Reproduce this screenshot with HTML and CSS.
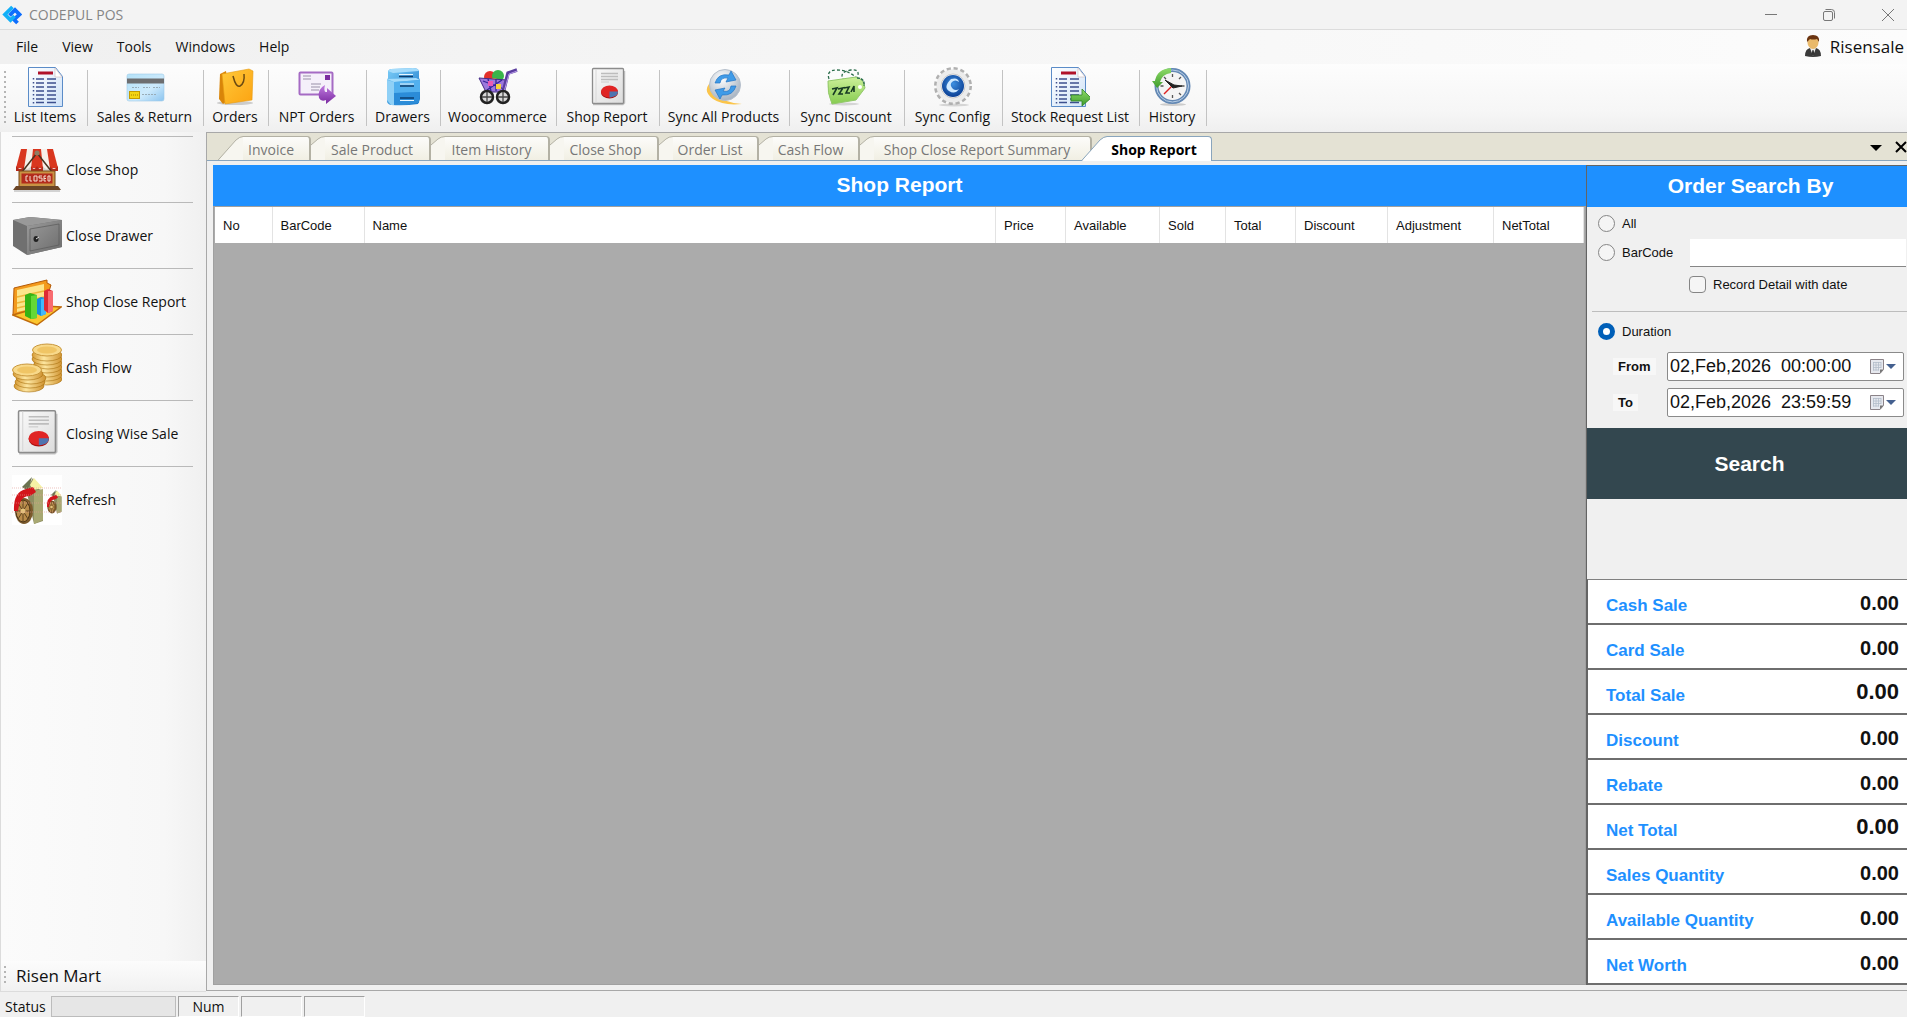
FILE: index.html
```html
<!DOCTYPE html>
<html lang="en">
<head>
    <meta charset="UTF-8">
    <meta name="viewport" content="width=device-width, initial-scale=1.0">
    <title>CODEPUL POS</title>
    <link rel="stylesheet" href="styles.css">
</head>
<body>
    <!-- Shared icons -->
    <svg width="0" height="0" class="defs">
        <defs>
            <linearGradient id="gPaper" x1="0" y1="0" x2="1" y2="1"><stop offset="0" stop-color="#fff"/><stop offset="1" stop-color="#cfe2f8"/></linearGradient>
            <linearGradient id="gPage" x1="0" y1="0" x2="1" y2="1"><stop offset="0" stop-color="#fafafa"/><stop offset="1" stop-color="#dcdcdc"/></linearGradient>
            <linearGradient id="gCard" x1="0" y1="0" x2="1" y2="1"><stop offset="0" stop-color="#b5e2f8"/><stop offset=".6" stop-color="#cdeafc"/><stop offset="1" stop-color="#8cc4ef"/></linearGradient>
            <linearGradient id="gBag" x1="0" y1="0" x2="1" y2="1"><stop offset="0" stop-color="#ffc93a"/><stop offset="1" stop-color="#fca311"/></linearGradient>
            <linearGradient id="gBlue" x1="0" y1="0" x2="1" y2="1"><stop offset="0" stop-color="#7ccdf8"/><stop offset="1" stop-color="#1676c8"/></linearGradient>
            <linearGradient id="gPurple" x1="0" y1="0" x2="0" y2="1"><stop offset="0" stop-color="#c07be0"/><stop offset="1" stop-color="#7a2aa0"/></linearGradient>
            <linearGradient id="gGreen" x1="0" y1="0" x2="0" y2="1"><stop offset="0" stop-color="#8fdc6a"/><stop offset="1" stop-color="#3f9c2c"/></linearGradient>
            <linearGradient id="gTag" x1="0" y1="0" x2="0" y2="1"><stop offset="0" stop-color="#cdf09a"/><stop offset="1" stop-color="#86cc50"/></linearGradient>
            <linearGradient id="gSafe" x1="0" y1="0" x2="1" y2="1"><stop offset="0" stop-color="#9b9b9b"/><stop offset="1" stop-color="#6b6b6b"/></linearGradient>
            <linearGradient id="gCoin" x1="0" y1="0" x2="1" y2="0"><stop offset="0" stop-color="#d69a34"/><stop offset=".4" stop-color="#fde6a0"/><stop offset="1" stop-color="#cf9230"/></linearGradient>
            <radialGradient id="gBall" cx=".4" cy=".3" r=".7"><stop offset="0" stop-color="#fff"/><stop offset="1" stop-color="#a8b4c2"/></radialGradient>
            <radialGradient id="gDeep" cx=".5" cy=".4" r=".6"><stop offset="0" stop-color="#3d8fe0"/><stop offset="1" stop-color="#0b3f94"/></radialGradient>
            <g id="listPage">
                <path d="M3.500.5h27l7 9v30h-34z" fill="url(#gPaper)" stroke="#5b8cc8"/>
                <path d="M30 1v9h7z" fill="#fff" stroke="#cbb" stroke-width=".6"/>
                <path d="M13 6h15" stroke="#b0122a" stroke-width="3"/>
                <path d="M11 12h8M22 12h9M11 16h8M22 16h9M11 20h8M22 20h9M11 24h8M22 24h9M11 28h8M22 28h9M11 32h8M22 32h9M11 35.500h8M22 35.500h9" stroke="#3c4f8e" stroke-width="1.500"/>
                <path d="M8.500 11v26" stroke="#3c4f8e" stroke-width="1.500" stroke-dasharray="1.500 2.500"/>
            </g>
            <g id="reportPage">
                <path d="M6 37.500h30l1.500-1.500V4" fill="none" stroke="#c4c4c4" stroke-width="1.500"/>
                <rect x="5.500" y="1.500" width="31" height="35" rx="1" fill="url(#gPage)" stroke="#8c8c8c" stroke-width="1.300"/>
                <path d="M9 2v34" stroke="#d8d8d8"/>
                <path d="M14 6.500h17M14 9.500h17M14 12.500h17" stroke="#bdbdbd" stroke-width="1.300"/>
                <path d="M14 15h8" stroke="#ccc"/>
                <ellipse cx="22.500" cy="25.500" rx="8.500" ry="6" fill="#a81010"/>
                <ellipse cx="22.500" cy="24.500" rx="8.500" ry="6" fill="#e02424"/>
                <path d="M22.500 24.500h8.500c0 3.500-3 5.500-8.500 6z" fill="#4f74b0"/>
            </g>
            <g id="calendar">
                <path d="M1.500 1.500h13v10l-3.500 4h-9.500z" fill="#e6e8ee" stroke="#8b8388"/>
                <path d="M14.500 11.500h-3.500v4z" fill="#777"/>
                <path d="M4 4.500h8M4 7h8M4 9.500h8M4 12h6M4.500 4v8.500M7 4v8.500M9.500 4v8.500M12 4v6" stroke="#b3bcc9" stroke-width=".8"/>
                <path d="M17 6h10l-5 5z" fill="#44608f"/>
            </g>
        </defs>
    </svg>

    <header class="titlebar">
        <svg class="logo" width="20" height="20" viewBox="0 0 20 20" fill="none" stroke-width="3.800">
            <path d="M7.500 10.500L13 5l4.500 4.500L12 14.500l3.500 3.500" stroke="#0d6efd"/>
            <path d="M10.500 2L3 9.500 8.500 15l4-4" stroke="#12b0f8"/>
        </svg>
        <span class="app-name">CODEPUL POS</span>
        <div class="window-buttons">
            <button aria-label="Minimize"><svg width="12" height="12"><path d="M0 5.500h12" stroke="#777"/></svg></button>
            <button aria-label="Restore"><svg width="12" height="12" fill="none" stroke="#777"><rect x=".5" y="2.500" width="9" height="9" rx="1.500"/><path d="M2.500.5h6q3 0 3 3v6"/></svg></button>
            <button aria-label="Close"><svg width="12" height="12"><path d="M0 0l12 12M12 0L0 12" stroke="#777"/></svg></button>
        </div>
    </header>

    <nav class="menubar">
        <button>File</button>
        <button>View</button>
        <button>Tools</button>
        <button>Windows</button>
        <button>Help</button>
        <div class="user">
            <svg width="18" height="24" viewBox="0 0 18 24">
                <path d="M1 22q0-7 5-8h6q5 1 5 8-8 2-16 0z" fill="#3a3a3a"/>
                <path d="M6 14l3 8 3-8z" fill="#eee"/>
                <path d="M8.500 16h1l1 4-1.500 2-1.500-2z" fill="#333"/>
                <ellipse cx="9" cy="8.500" rx="5.500" ry="6.500" fill="#e9b96b"/>
                <path d="M3 8Q2 1 9 1t6 7l-2-3q-4 1-7 0z" fill="#6b3411"/>
            </svg>
            <span>Risensale</span>
        </div>
    </nav>

    <div class="toolbar">
        <button class="tool">
            <svg viewBox="0 0 40 40"><use href="#listPage"/></svg>
            <span>List Items</span>
        </button>
        <button class="tool">
            <svg viewBox="0 0 40 40">
                <rect x="2" y="7" width="37" height="27" rx="2" fill="url(#gCard)" stroke="#9dcbe8" stroke-width=".6"/>
                <path d="M2 14h37" stroke="#6d6e70" stroke-width="5"/>
                <path d="M7 20.500h7M18 20.500h7M28 20.500h7M17 27.500h15" stroke="#98acb8" stroke-dasharray="2 1"/>
                <rect x="4.500" y="24.500" width="10" height="7" fill="#f4d512" stroke="#c49b00"/>
                <path d="M6 28h7" stroke="#a88500" stroke-dasharray="1 1"/>
            </svg>
            <span>Sales &amp; Return</span>
        </button>
        <button class="tool">
            <svg viewBox="0 0 40 40">
                <ellipse cx="20" cy="36" rx="18" ry="2" fill="#ccc"/>
                <path d="M5 7l6-3 4 28-7 5-4-5z" fill="#d98509"/>
                <path d="M7 7l27-5 4 2-1 29-27 4z" fill="url(#gBag)" stroke="#e69a10" stroke-width=".6"/>
                <path d="M18 9q3 12 7 10 5-3 4-12" fill="none" stroke="#6b4a12" stroke-width="1.500"/>
            </svg>
            <span>Orders</span>
        </button>
        <button class="tool">
            <svg viewBox="0 0 40 40">
                <rect x="2.500" y="5.500" width="33" height="22" rx="1" fill="#f5f0fa" stroke="#a56bc4" stroke-width="2"/>
                <rect x="28" y="8" width="5" height="5" fill="#7c2ea0"/>
                <path d="M6 9h8M6 12h8M14 17h10M14 20h9M14 23h8" stroke="#b8b0c4" stroke-width="1.300"/>
                <path d="M28 18q-8 4-6 13 2 4 7 2v4l10-8-9-8v4q-4 1-2-7z" fill="url(#gPurple)"/>
            </svg>
            <span>NPT Orders</span>
        </button>
        <button class="tool">
            <svg viewBox="0 0 40 40">
                <path d="M5 4q1-2 3-2l22-1q5 0 6 3v7l1 2v19l-2 5q-13 2-27 1-4-1-4-4V13l1-2z" fill="url(#gBlue)"/>
                <path d="M5 4l3-2 22-1q5 0 6 3L10 6zM4 12l29-1 4 2-26 2z" fill="#a5dcfb"/>
                <path d="M11 15l26-2v12l-26 1z" fill="#52b0ee"/>
                <path d="M11 26l26-1-1 11-25 2z" fill="#2b8cd8"/>
                <path d="M4 13v20l4 5h3V15z" fill="#8fd0f6"/>
                <path d="M16 9.500h14M17 19h14M17 31h14" stroke="#0d3c6c" stroke-width="1.500"/>
                <path d="M17 17h14M17 33.500h14M16 7.500h14" stroke="#e8f6ff"/>
            </svg>
            <span>Drawers</span>
        </button>
        <button class="tool">
            <svg viewBox="0 0 40 40">
                <circle cx="12" cy="10" r="6" fill="#e2302a"/>
                <circle cx="20" cy="9" r="6" fill="#39b54a"/>
                <circle cx="16" cy="15" r="4" fill="#f7b52c"/>
                <path d="M1 11l28 2-3 12H8z" fill="#9c78dc" stroke="#442a86"/>
                <path d="M5 14l21 8M9 23l15-10M10 12l3 12M18 12v12" stroke="#34249a" stroke-width="1.300"/>
                <path d="M10 14h5v5h-5z" fill="#e95ab7"/><path d="M18 17h5v5h-5z" fill="#f7d33c"/>
                <path d="M25 26l5-20 9-3" fill="none" stroke="#5a3d9e" stroke-width="3.500"/>
                <path d="M26 25l5-18 8-3" fill="none" stroke="#b79be8"/>
                <g fill="#d9d9d9" stroke="#222" stroke-width="2.500"><circle cx="9" cy="30" r="6"/><circle cx="25" cy="30" r="6"/></g>
                <path d="M9 25v10M4 30h10M25 25v10M20 30h10" stroke="#444" stroke-width="1.300"/>
            </svg>
            <span>Woocommerce</span>
        </button>
        <button class="tool">
            <svg viewBox="0 0 40 40"><use href="#reportPage"/></svg>
            <span>Shop Report</span>
        </button>
        <button class="tool">
            <svg viewBox="0 0 40 40">
                <path d="M5 17Q-1 25 9 32t29 5q-18-1-25-10-4-6-4-12z" fill="#fbc54b"/>
                <circle cx="21" cy="18" r="15.500" fill="url(#gBall)" stroke="#b6c0cc"/>
                <path d="M11 16q3-10 14-8l2-4 5 9-10 2 2-4q-7-1-8 5zM32 19q-3 10-14 9l-2 4-5-9 10-2-2 3q7 2 8-5z" fill="#3f9be8" stroke="#2374c4" stroke-width=".7"/>
            </svg>
            <span>Sync All Products</span>
        </button>
        <button class="tool">
            <svg viewBox="0 0 40 40">
                <ellipse cx="18" cy="37" rx="15" ry="1.500" fill="#d5d5d5"/>
                <path d="M3 12Q0 3 11 3t20 8q4-9-6-8-12 2-8 9" fill="none" stroke="#2c6e4c" stroke-width="1.300" stroke-dasharray="3 2"/>
                <path d="M2 14l28-4q8 2 9 11l-9 12-24 4q-5-11-4-23z" fill="url(#gTag)" stroke="#92c86a"/>
                <path d="M31 11q8 0 7 8" fill="none" stroke="#2c6e4c" stroke-width="1.500" stroke-dasharray="3 1"/>
                <circle cx="34" cy="20" r="2" fill="#fff"/>
                <path d="M6 22l5-1-4 7M12 22l5-1-4 6h4M18 21l5-1-3 6h4M25 25l3-6v6" fill="none" stroke="#173a24" stroke-width="1.600"/>
            </svg>
            <span>Sync Discount</span>
        </button>
        <button class="tool">
            <svg viewBox="0 0 40 40">
                <ellipse cx="21" cy="38" rx="15" ry="1.500" fill="#d5d5d5"/>
                <circle cx="20" cy="19" r="17" fill="#f3f3f3" stroke="#b0b0b0" stroke-width="4" stroke-dasharray="4 2.680"/>
                <circle cx="20" cy="19" r="16.500" fill="#ececec"/>
                <circle cx="20" cy="19" r="12" fill="#fff" stroke="#c8c8c8"/>
                <circle cx="20" cy="19" r="11" fill="url(#gDeep)"/>
                <path d="M18 12q7-2 8 3-4-3-7 0t1 7q3 2 6 0-4 6-10 2t2-12z" fill="#cfe9ff"/>
            </svg>
            <span>Sync Config</span>
        </button>
        <button class="tool">
            <svg viewBox="0 0 40 40">
                <use href="#listPage" x="-2"/>
                <path d="M21 28h11v-6l9 9-9 8v-5H21z" fill="url(#gGreen)" stroke="#2f8424" stroke-width=".8"/>
            </svg>
            <span>Stock Request List</span>
        </button>
        <button class="tool">
            <svg viewBox="0 0 40 40">
                <ellipse cx="21" cy="37.500" rx="13" ry="1.500" fill="#ccc"/>
                <circle cx="20.500" cy="19" r="16" fill="#f4f4f4" stroke="#6388b4" stroke-width="4"/>
                <circle cx="20.500" cy="19" r="16" fill="none" stroke="#b8cee6"/>
                <path d="M20.500 7v3M20.500 28v3M8.500 19h3M29.500 19h3M12 10l2 2M29 28l-2-2M29 10l-2 2" stroke="#555" stroke-width="1.300"/>
                <path d="M20 19l-8 8" stroke="#d22" stroke-width="1.500"/>
                <path d="M13 13l9 5 8 1-9 2z" fill="#222" stroke="#222"/>
                <path d="M19 1v5q-9 1-11 9h3l-6 6-5-7h3Q5 2 19 1z" fill="url(#gGreen)"/>
            </svg>
            <span>History</span>
        </button>
    </div>

    <div class="workspace">
        <aside class="sidebar">
            <div class="side-items">
                <button class="side-item">
                    <svg viewBox="0 0 50 50">
                        <path d="M9 4h32l5 19H4z" fill="#d9361f"/>
                        <path d="M15 4h6l-2 20h-7zM29 4h6l3 20h-7z" fill="#f6f0ea"/>
                        <path d="M4 21q4 6 8 0v5H4zM19 21q3 6 6 0 3 6 6 0v5H19zM38 21q4 6 8 0v5h-8z" fill="#b5271a"/>
                        <path d="M12 21q3 6 7 0v5h-7zM31 21q3 6 7 0v5h-7z" fill="#d8d0c8"/>
                        <path d="M10 27L25 8l15 19" fill="none" stroke="#4a3320" stroke-width="1.500"/>
                        <circle cx="25" cy="8" r="2.500" fill="#8d7d63"/>
                        <rect x="7" y="26" width="36" height="16" fill="#c99243" stroke="#7b4a1c"/>
                        <rect x="9.500" y="28.500" width="31" height="10" fill="#b32b1d"/>
                        <path d="M16 31h-2v5h2M18 31v5h2M22 31h3v5h-3zM30 31h-3v2h3v3h-3M34 31h-2v5h2M32 33.500h2M36 31h2v5h-2z" fill="none" stroke="#f5ddd0"/>
                        <path d="M4 41h42l3 4H1z" fill="#6b4526"/><path d="M2 46h46" stroke="#aaa"/>
                    </svg>
                    <span>Close Shop</span>
                </button>
                <button class="side-item">
                    <svg viewBox="0 0 50 50">
                        <path d="M1 9l17-3 32 3v27L15 44 1 35z" fill="#707070"/>
                        <path d="M1 9l17-3 32 3-35 6z" fill="#999"/>
                        <path d="M15 15l35-6v27l-35 8z" fill="url(#gSafe)"/>
                        <path d="M18 18l29-5v21l-29 6z" fill="none" stroke="#5a5a5a" stroke-width=".7"/>
                        <ellipse cx="24" cy="28" rx="2.500" ry="3" fill="#222"/><path d="M24 28l3-2" stroke="#ddd"/>
                    </svg>
                    <span>Close Drawer</span>
                </button>
                <button class="side-item">
                    <svg viewBox="0 0 50 50">
                        <path d="M2 11l33-8v3l4 2-7 22-31 8z" fill="#f39a1c" stroke="#b45a08"/>
                        <path d="M5 13l27-6v22L5 35z" fill="#fde58a"/>
                        <path d="M5 20l27-6M5 26l27-6M5 31l27-6" stroke="#eeb73a" stroke-width="1.500"/>
                        <path d="M1 38l31-9 17 1-24 18z" fill="#fbc62e" stroke="#c06a0c" stroke-width="1.500"/>
                        <path d="M13 18l5-2 7 2v23l-6 1-6-3z" fill="#36b314"/><path d="M19 19l6-1v23l-6 1z" fill="#65d836"/>
                        <path d="M25 22l4-2 5 1v16l-5 2-4-2z" fill="#148ce0"/><path d="M29 22l5-1v16l-5 2z" fill="#43b8fa"/>
                        <path d="M32 14l4-2 5 2v20l-5 2-4-3z" fill="#de2a35"/><path d="M36 14l5 0v20l-5 2z" fill="#f86b70"/>
                    </svg>
                    <span>Shop Close Report</span>
                </button>
                <button class="side-item">
                    <svg viewBox="0 0 50 50">
                        <g fill="url(#gCoin)" stroke="#a8700f" stroke-width=".6">
                            <ellipse cx="35" cy="36" rx="15" ry="6"/><ellipse cx="35" cy="32" rx="15" ry="6"/><ellipse cx="36" cy="28" rx="14" ry="6"/><ellipse cx="35" cy="24" rx="15" ry="6"/><ellipse cx="36" cy="20" rx="14" ry="6"/><ellipse cx="35" cy="16" rx="15" ry="6"/><ellipse cx="35" cy="12" rx="15" ry="6"/>
                        </g>
                        <ellipse cx="35" cy="7" rx="14.500" ry="6" fill="#f8d98a" stroke="#c9973c"/>
                        <ellipse cx="35" cy="7" rx="10" ry="3.500" fill="#f0c565"/>
                        <g fill="url(#gCoin)" stroke="#a8700f" stroke-width=".6">
                            <ellipse cx="17" cy="43" rx="15" ry="6"/><ellipse cx="18" cy="39" rx="15" ry="6"/><ellipse cx="19" cy="35" rx="15" ry="6"/><ellipse cx="16" cy="31" rx="15" ry="6"/>
                        </g>
                        <ellipse cx="15" cy="27" rx="14.500" ry="6" fill="#f8d98a" stroke="#c9973c"/>
                        <ellipse cx="15" cy="27" rx="10" ry="3.500" fill="#f0c565"/>
                    </svg>
                    <span>Cash Flow</span>
                </button>
                <button class="side-item">
                    <svg viewBox="0 0 42 42"><use href="#reportPage"/></svg>
                    <span>Closing Wise Sale</span>
                </button>
                <button class="side-item">
                    <svg viewBox="0 0 50 50">
                        <path d="M0 0h50v50H0z" fill="#fff"/>
                        <g id="safe">
                            <path d="M14 14l7-11 4 10 6 3v30l-9 3z" fill="#8d8d62"/>
                            <path d="M10 12l10-10-4 14z" fill="#6b7350"/>
                            <path d="M22 3l9 10-10 2-3-5z" fill="#f5f1a5"/>
                            <path d="M22 16l9-2v31l-9 4z" fill="#a8a872"/>
                            <ellipse cx="12" cy="36" rx="9" ry="13" fill="#7c5a2c"/>
                            <ellipse cx="11" cy="36" rx="7" ry="11" fill="#b98c4a" stroke="#4e3718"/>
                            <path d="M11 25v22M4 36h14M6 28l10 16M16 28L6 44" stroke="#5e431e"/>
                            <circle cx="11" cy="36" r="2.500" fill="#e5c37c"/>
                            <path d="M2 36q-1-19 12-22l7-2 3 5-6 4q-10-1-12 15z" fill="#d3161c"/>
                        </g>
                        <use href="#safe" transform="translate(34 14) scale(.5)"/>
                        <path d="M0 13h50M0 20h50M0 28h50M0 37h50" stroke="#e09a96" stroke-width=".6" stroke-dasharray="1 1"/>
                    </svg>
                    <span>Refresh</span>
                </button>
            </div>
            <div class="store-name">Risen Mart</div>
        </aside>

        <main class="document">
            <div class="tabs">
                <button class="tab"><svg width="27" height="27"><path d="M0 27L20 4q4-3 7-3V27z" class="tab-fill"/><path d="M0 26.500L20 4q4-3.500 7-3.500" class="tab-line"/></svg><span>Invoice</span></button>
                <button class="tab"><svg width="14" height="27"><path d="M0 9l7-6q3-2 7-2v26H0z" class="tab-fill"/><path d="M0 9l7-6q3-2.500 7-2.500" class="tab-line"/></svg><span>Sale Product</span></button>
                <button class="tab"><svg width="14" height="27"><path d="M0 9l7-6q3-2 7-2v26H0z" class="tab-fill"/><path d="M0 9l7-6q3-2.500 7-2.500" class="tab-line"/></svg><span>Item History</span></button>
                <button class="tab"><svg width="14" height="27"><path d="M0 9l7-6q3-2 7-2v26H0z" class="tab-fill"/><path d="M0 9l7-6q3-2.500 7-2.500" class="tab-line"/></svg><span>Close Shop</span></button>
                <button class="tab"><svg width="14" height="27"><path d="M0 9l7-6q3-2 7-2v26H0z" class="tab-fill"/><path d="M0 9l7-6q3-2.500 7-2.500" class="tab-line"/></svg><span>Order List</span></button>
                <button class="tab"><svg width="14" height="27"><path d="M0 9l7-6q3-2 7-2v26H0z" class="tab-fill"/><path d="M0 9l7-6q3-2.500 7-2.500" class="tab-line"/></svg><span>Cash Flow</span></button>
                <button class="tab"><svg width="14" height="27"><path d="M0 9l7-6q3-2 7-2v26H0z" class="tab-fill"/><path d="M0 9l7-6q3-2.500 7-2.500" class="tab-line"/></svg><span>Shop Close Report Summary</span></button>
                <button class="tab active"><svg width="27" height="27"><path d="M0 27L20 4q4-3 7-3V27z" class="tab-fill"/><path d="M0 26.500L20 4q4-3.500 7-3.500" class="tab-line"/></svg><span>Shop Report</span></button>
                <div class="tab-controls">
                    <button aria-label="Tab list"><svg width="12" height="12"><path d="M0 4h12L6 10z"/></svg></button>
                    <button aria-label="Close tab"><svg width="12" height="12"><path d="M1 1l10 10M11 1L1 11" stroke="#000" stroke-width="2"/></svg></button>
                </div>
            </div>

            <div class="content">
                <section class="report">
                    <h1 class="heading">Shop Report</h1>
                    <div class="grid">
                        <table>
                            <colgroup>
                                <col class="w-no"><col class="w-barcode"><col><col class="w-price"><col class="w-available"><col class="w-sold"><col class="w-total"><col class="w-discount"><col class="w-adjustment"><col class="w-net">
                            </colgroup>
                            <thead>
                                <tr>
                                    <th>No</th>
                                    <th>BarCode</th>
                                    <th>Name</th>
                                    <th>Price</th>
                                    <th>Available</th>
                                    <th>Sold</th>
                                    <th>Total</th>
                                    <th>Discount</th>
                                    <th>Adjustment</th>
                                    <th>NetTotal</th>
                                </tr>
                            </thead>
                            <tbody></tbody>
                        </table>
                    </div>
                </section>

                <section class="search">
                    <h2 class="heading">Order Search By</h2>
                    <form class="filters">
                        <div class="row">
                            <input type="radio" name="by" id="byAll">
                            <label for="byAll">All</label>
                        </div>
                        <div class="row">
                            <input type="radio" name="by" id="byBarcode">
                            <label for="byBarcode">BarCode</label>
                            <input type="text" class="barcode" aria-label="BarCode">
                        </div>
                        <div class="row detail">
                            <input type="checkbox" id="withDate">
                            <label for="withDate">Record Detail with date</label>
                        </div>
                        <hr>
                        <div class="row">
                            <input type="radio" name="by" id="byDuration" checked>
                            <label for="byDuration">Duration</label>
                        </div>
                        <div class="dates">
                            <div class="date-row">
                                <label for="from">From</label>
                                <div class="date-box">
                                    <input type="text" id="from" value="02,Feb,2026  00:00:00">
                                    <svg width="28" height="18"><use href="#calendar"/></svg>
                                </div>
                            </div>
                            <div class="date-row">
                                <label for="to">To</label>
                                <div class="date-box">
                                    <input type="text" id="to" value="02,Feb,2026  23:59:59">
                                    <svg width="28" height="18"><use href="#calendar"/></svg>
                                </div>
                            </div>
                        </div>
                    </form>
                    <button class="search-button">Search</button>
                    <dl class="totals">
                        <div><dt>Cash Sale</dt><dd>0.00</dd></div>
                        <div><dt>Card Sale</dt><dd>0.00</dd></div>
                        <div><dt>Total Sale</dt><dd class="big">0.00</dd></div>
                        <div><dt>Discount</dt><dd>0.00</dd></div>
                        <div><dt>Rebate</dt><dd>0.00</dd></div>
                        <div><dt>Net Total</dt><dd class="big">0.00</dd></div>
                        <div><dt>Sales Quantity</dt><dd>0.00</dd></div>
                        <div><dt>Available Quantity</dt><dd>0.00</dd></div>
                        <div><dt>Net Worth</dt><dd>0.00</dd></div>
                    </dl>
                </section>
            </div>
        </main>
    </div>

    <footer class="statusbar">
        <span class="status-label">Status</span>
        <div class="progress"></div>
        <div class="panel">Num</div>
        <div class="panel"></div>
        <div class="panel"></div>
    </footer>
</body>
</html>
```

FILE: styles.css
```css
* {
    box-sizing: border-box;
}
body {
    margin: 0;
    height: 100vh;
    display: flex;
    flex-direction: column;
    overflow: hidden;
    background: #f0f0f0;
    color: #111;
    font-family: "Open Sans", "Noto Sans", sans-serif;
    font-size: 14px;
}
button {
    margin: 0;
    padding: 0;
    border: none;
    background: none;
    color: inherit;
    font: inherit;
    white-space: nowrap;
}
svg {
    display: block;
    flex: none;
}
.defs {
    position: absolute;
}

/* Title bar and menu */
.titlebar {
    display: flex;
    align-items: center;
    height: 30px;
    padding-left: 2px;
    background: #f3f3f3;
    border-bottom: 1px solid #dcdcdc;
    color: #858585;
    flex: none;
}
.app-name {
    margin-left: 7px;
}
.window-buttons {
    display: flex;
    margin-left: auto;
}
.window-buttons button {
    display: flex;
    justify-content: center;
    width: 58px;
}
.window-buttons button:last-child {
    width: 60px;
    margin-right: -11px;
}
.menubar {
    display: flex;
    align-items: center;
    gap: 24px;
    height: 34px;
    padding: 0 3px 2px 16px;
    background: linear-gradient(to right, #f0f0f0, #fcfcfc);
    flex: none;
}
.user {
    display: flex;
    align-items: center;
    gap: 8px;
    margin-left: auto;
    font-size: 17px;
}

/* Toolbar */
.toolbar {
    display: grid;
    grid-template-columns: 83px 116px 65px 98px 74px 116px 103px 130px 115px 98px 137px 67px;
    align-items: center;
    height: 68px;
    padding-left: 5px;
    background: linear-gradient(#fdfdfd, #f6f6f6 70%, #efefef);
    flex: none;
}
.toolbar::before, .store-name::before {
    content: "";
    position: absolute;
    left: 4px;
    width: 2px;
    height: 54px;
    background: repeating-linear-gradient(#b5b5b5 0 2px, transparent 2px 5px);
}
.tool {
    display: flex;
    flex-direction: column;
    align-items: center;
    height: 56px;
    padding-right: 2px;
    border-right: 1px solid #c3c3c3;
    line-height: 20px;
}
.tool svg {
    width: 40px;
    height: 40px;
    margin-top: -3px;
}

/* Left side */
.workspace {
    display: flex;
    flex: 1;
    min-height: 0;
}
.sidebar {
    display: flex;
    flex-direction: column;
    width: 206px;
    background: linear-gradient(to right, #fbfbfb, #f7f7f7 80%, #f0f0f0);
    border-left: 1px solid #dcdcdc;
    flex: none;
}
.side-items {
    flex: 1;
    padding: 4px 13px 0 11px;
}
.side-item {
    display: flex;
    align-items: center;
    gap: 4px;
    width: 100%;
    height: 66px;
    border-top: 1px solid #b9b9b9;
}
.side-item svg {
    width: 50px;
    height: 50px;
}
.store-name {
    display: flex;
    align-items: center;
    height: 31px;
    padding: 0 0 2px 15px;
    background: linear-gradient(#fcfcfc, #f1f1f1);
    border-bottom: 1px solid #dcdcdc;
    font-size: 17px;
}
.store-name::before {
    height: 18px;
}

/* Document tabs */
.document {
    display: flex;
    flex-direction: column;
    flex: 1;
    min-width: 0;
    margin-bottom: 1px;
    border: 1px solid #a8a8a8;
    border-right: none;
    background: #f0f0f0;
}
.tabs {
    display: grid;
    grid-template-columns: 95px 120px 119px 109px 100px 101px 232px 120px 1fr;
    align-items: end;
    height: 28px;
    padding-left: 9px;
    background: #e4e2d4;
    border-bottom: 1px solid #89a5bd;
    flex: none;
}
.tab {
    display: flex;
    height: 24px;
    color: #777;
}
.tab svg {
    height: 24px;
}
.tab span {
    flex: 1;
    padding-right: 10px;
    border-top: 1px solid #b3b1a4;
    border-right: 2px solid #b3b1a4;
    border-top-right-radius: 4px;
    background: linear-gradient(#fcfcfa, #f1efe3);
    line-height: 25px;
}
.tab-fill {
    fill: #f7f6f0;
}
.tab-line {
    fill: none;
    stroke: #b3b1a4;
}
.tab.active {
    height: 25px;
    margin: 0 0 -1px -12px;
    color: #000;
    font-weight: bold;
    z-index: 1;
}
.active svg {
    height: 25px;
}
.tab.active span {
    border-color: #89a5bd;
    border-right-width: 1px;
    background: #fff;
}
.active .tab-fill {
    fill: #fff;
}
.active .tab-line {
    stroke: #89a5bd;
}
.tab-controls {
    display: flex;
    align-items: center;
    justify-content: flex-end;
    gap: 13px;
    height: 100%;
}

/* Report */
.content {
    display: flex;
    flex: 1;
    min-height: 0;
    padding: 4px 0 5px 6px;
}
.report {
    display: flex;
    flex-direction: column;
    flex: 1;
    min-width: 0;
}
.heading {
    margin: 0;
    height: 41px;
    background: #1e90ff;
    color: #fff;
    font: bold 21px/40px "Liberation Sans", Arial, sans-serif;
    text-align: center;
    flex: none;
}
.grid {
    flex: 1;
    padding: 0 1px;
    background: #ababab;
    border: 1px solid #a0a0a0;
}
table {
    width: 100%;
    table-layout: fixed;
    border-collapse: collapse;
    background: #fff;
    font-family: "Liberation Sans", Arial, sans-serif;
    font-size: 13px;
}
th {
    height: 36px;
    padding: 0 8px;
    border-right: 1px solid #e3e3e3;
    text-align: left;
    font-weight: normal;
}
.w-no {
    width: 57px;
}
.w-barcode {
    width: 92px;
}
.w-price, .w-total {
    width: 70px;
}
.w-available {
    width: 94px;
}
.w-sold {
    width: 66px;
}
.w-discount {
    width: 92px;
}
.w-adjustment {
    width: 106px;
}
.w-net {
    width: 90px;
}

/* Search panel */
.search {
    display: flex;
    flex-direction: column;
    width: 321px;
    border-left: 1px solid #646464;
    border-top: 1px solid #646464;
    font-family: "Liberation Sans", Arial, sans-serif;
    font-size: 13px;
    flex: none;
}
.search .heading {
    padding-left: 7px;
}
.filters {
    padding: 2px 0 4px 11px;
}
.row {
    display: flex;
    align-items: center;
    height: 29px;
    gap: 7px;
}
.row input[type="radio"], .row input[type="checkbox"] {
    appearance: none;
    width: 17px;
    height: 17px;
    margin: 0;
    border: 1px solid #858585;
    border-radius: 50%;
    background: #f5f5f5;
    flex: none;
}
.row input[type="checkbox"] {
    border-radius: 4px;
}
.row input[type="radio"]:checked {
    border: 5px solid #005fb8;
    background: #fff;
}
.barcode {
    flex: 1;
    min-width: 0;
    height: 28px;
    margin: 0 1px 0 10px;
    border: none;
    border-bottom: 1px solid #868686;
    background: #fff;
}
.detail {
    height: 34px;
    padding-left: 91px;
}
.filters hr {
    margin: 10px 0 5px -6px;
    border: none;
    border-top: 1px solid #bdbdbd;
}
.dates {
    padding-top: 6px;
}
.date-row {
    display: flex;
    align-items: center;
    justify-content: space-between;
    margin: 0 3px 7px 15px;
}
.date-row label {
    padding: 0 5px;
    background: #f7f7f7;
    font-weight: bold;
    line-height: 17px;
}
.date-box {
    display: flex;
    align-items: center;
    width: 237px;
    height: 29px;
    padding-right: 6px;
    border: 1px solid #8a8a8a;
    border-radius: 2px;
    background: #fff;
}
.date-box input {
    flex: 1;
    min-width: 0;
    padding: 0 2px;
    border: none;
    background: none;
    color: #111;
    font: 18px "Liberation Sans", Arial, sans-serif;
}
.search-button {
    height: 71px;
    padding-left: 5px;
    background: #33474f;
    color: #fff;
    font: bold 21px "Liberation Sans", Arial, sans-serif;
    flex: none;
}
.totals {
    margin: auto 0 0;
    border-top: 1px solid #808080;
    border-left: 1px solid #646464;
    background: #fff;
}
.totals div {
    display: flex;
    align-items: center;
    justify-content: space-between;
    height: 45px;
    padding: 0 8px 0 18px;
    border-bottom: 2px solid #6e6e6e;
}
.totals dt {
    padding-top: 8px;
    color: #1e90ff;
    font-size: 17px;
    font-weight: bold;
}
.totals dd {
    margin: 0;
    padding-top: 4px;
    font-size: 20px;
    font-weight: bold;
}
.totals .big {
    padding-top: 0;
    font-size: 22px;
}

/* Status bar */
.statusbar {
    display: flex;
    align-items: center;
    gap: 2px;
    height: 25px;
    padding: 4px 0 0 5px;
    flex: none;
}
.status-label {
    width: 44px;
}
.progress {
    width: 125px;
    height: 21px;
    background: #e6e6e6;
    border: 1px solid #bcbcbc;
}
.panel {
    width: 61px;
    height: 21px;
    border: 1px solid #fff;
    border-top-color: #a0a0a0;
    border-left-color: #a0a0a0;
    line-height: 20px;
    text-align: center;
}
```
